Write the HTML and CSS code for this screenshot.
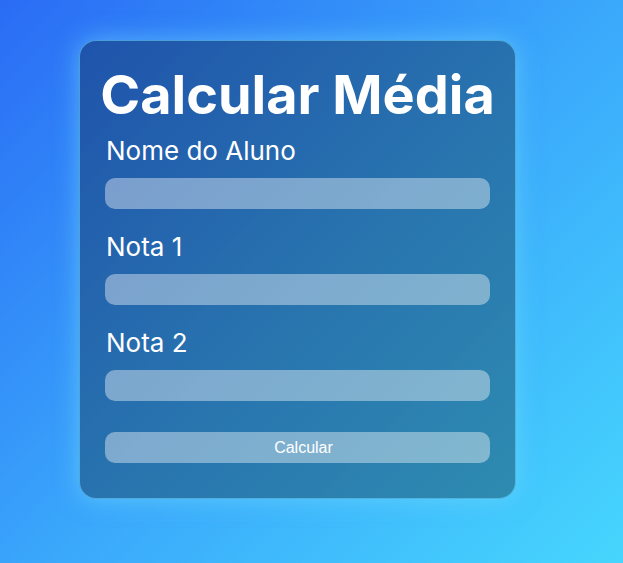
FILE: index.html
```html
<!DOCTYPE html>
<html lang="pt-BR">
<head>
<meta charset="utf-8">
<title>Calcular Média</title>
<link rel="stylesheet" href="styles.css">
</head>
<body>
  <main class="page">
    <form class="card">
      <h1 class="title">Calcular Média</h1>
      <label class="label" for="nome">Nome do Aluno</label>
      <input class="field" id="nome" type="text">
      <label class="label" for="n1">Nota 1</label>
      <input class="field" id="n1" type="text">
      <label class="label" for="n2">Nota 2</label>
      <input class="field" id="n2" type="text">
      <button class="btn" type="button">Calcular</button>
    </form>
  </main>
</body>
</html>
```

FILE: styles.css
```css
html, body {
  margin: 0;
  padding: 0;
  height: 100%;
}
body {
  background: linear-gradient(135deg, #2a6cf5 0%, #3aa6fb 50%, #46d6fd 100%);
  font-family: Inter, "Noto Sans", sans-serif;
  color: #fff;
}
.page {
  padding: 40px 0 0 79px;
}
.card {
  box-sizing: border-box;
  width: 437px;
  height: 459px;
  padding: 22px 25px 0 25px;
  border: 1px solid rgba(110, 215, 255, 0.55);
  border-radius: 17px;
  background: rgba(0, 0, 0, 0.3);
  box-shadow: 0 0 24px rgba(120, 220, 255, 0.55);
  display: flex;
  flex-direction: column;
}
.title {
  margin: 0 -10px 8px -10px;
  text-align: center;
  font-size: 54px;
  font-weight: 700;
  letter-spacing: 0;
  line-height: 64px;
}
.label {
  font-size: 26px;
  line-height: 32px;
  margin-left: 1px;
}
.field {
  box-sizing: border-box;
  height: 31px;
  margin: 11px 0 22px 0;
  border: none;
  border-radius: 10px;
  background: rgba(255, 255, 255, 0.4);
}
.btn {
  height: 31px;
  margin-top: 9px;
  padding: 0 0 0 12px;
  border: none;
  border-radius: 10px;
  background: rgba(255, 255, 255, 0.4);
  color: #fff;
  font-family: "Liberation Sans", Arial, sans-serif;
  font-size: 16px;
}
```
